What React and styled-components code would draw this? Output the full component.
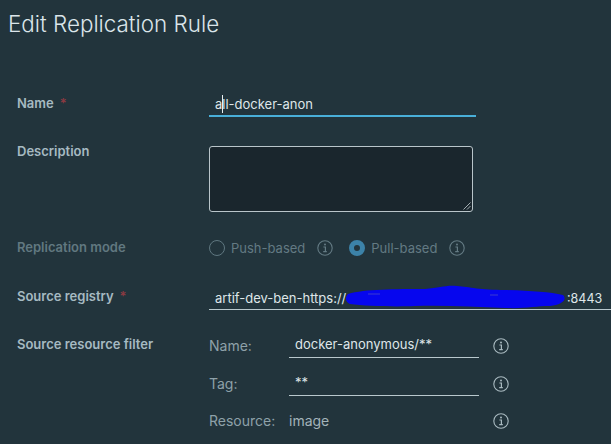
import React from 'react'
import styled, { createGlobalStyle } from 'styled-components'

const Global = createGlobalStyle`
  html, body {
    margin: 0;
    height: 100%;
    background: #22343c;
    overflow: hidden;
  }
`

const Page = styled.div`
  width: 611px;
  height: 444px;
  overflow: hidden;
  background: #22343c;
  font-family: Inter, "Liberation Sans", sans-serif;
`

const Title = styled.h1`
  margin: 0;
  padding: 10px 0 0 8px;
  height: 85px;
  box-sizing: border-box;
  font-size: 22.4px;
  line-height: 28px;
  font-weight: 300;
  color: #dbe5ea;
`

const Row = styled.div`
  display: grid;
  grid-template-columns: 192px 1fr;
  padding-left: 17px;
  height: ${p => p.$height}px;
`

const Label = styled.div`
  padding-top: ${p => p.$top || 0}px;
  font-size: 13px;
  line-height: 16px;
  font-weight: 600;
  color: ${p => (p.$muted ? '#617880' : '#a6bac2')};
`

const Star = styled.span`
  margin-left: 6px;
  color: #8c3a42;
`

const TextField = styled.div`
  position: relative;
  box-sizing: border-box;
  width: ${p => p.$width}px;
  height: ${p => p.$height || 31}px;
  padding: ${p => p.$top ?? 9}px 0 0 6px;
  border-bottom: ${p => (p.$active ? '2px solid #49afd9' : '1px solid #b9c8cd')};
  font-size: 13px;
  line-height: 17px;
  color: #dfe6e9;
  white-space: nowrap;
`

const Caret = styled.span`
  position: absolute;
  left: 13px;
  top: 10px;
  width: 1px;
  height: 18px;
  background: #e8eef0;
`

const TextArea = styled.div`
  position: relative;
  box-sizing: border-box;
  width: 264px;
  height: 66px;
  margin-top: 3px;
  border: 1px solid #b9c5ca;
  border-radius: 3px;
  background: #1a262d;
`

const Grip = styled.svg`
  position: absolute;
  right: 1px;
  bottom: 1px;
  width: 8px;
  height: 8px;
`

const Modes = styled.div`
  display: flex;
  align-items: center;
  height: 18px;
`

const Radio = styled.span`
  box-sizing: border-box;
  flex: none;
  width: 16px;
  height: 16px;
  border-radius: 50%;
  border: ${p => (p.$checked ? '5px solid #3c82a8' : '1px solid #5f7780')};
  background: ${p => (p.$checked ? '#22343c' : 'transparent')};
`

const ModeText = styled.span`
  margin: 0 12px 0 6px;
  font-size: 13px;
  color: #637a83;
`

const IconBox = styled.svg`
  flex: none;
  width: 16px;
  height: 16px;
  margin-right: ${p => p.$after || 0}px;
  color: ${p => (p.$muted ? '#647b84' : '#a9bac0')};
`

const Scribble = styled.svg`
  position: absolute;
  left: 136px;
  top: -5px;
  width: 222px;
  height: 26px;
`

const Port = styled.span`
  position: absolute;
  left: 358px;
  top: 2px;
  font-size: 12.5px;
`

const Filter = styled.div`
  display: grid;
  grid-template-columns: 80px 190px 30px;
  grid-auto-rows: 37.5px;
  margin-top: -9px;
  align-items: start;
`

const FilterLabel = styled.div`
  padding-top: 10px;
  font-size: 14px;
  line-height: 17px;
  color: #8ea1a9;
`

const Plain = styled.div`
  padding-top: 10px;
  font-size: 14px;
  line-height: 17px;
  color: #a3b3b9;
`

const InfoSlot = styled.div`
  display: flex;
  justify-content: flex-end;
  padding-top: 11px;
`

function InfoIcon({ muted, after }) {
  return (
    <IconBox viewBox="0 0 16 16" $muted={muted} $after={after} fill="none">
      <circle cx="8" cy="8" r="7.2" stroke="currentColor" strokeWidth="1.1" />
      <circle cx="8" cy="4.6" r="1" fill="currentColor" />
      <path d="M6.4 7h2v4.4M6.2 11.6h3.6" stroke="currentColor" strokeWidth="1.2" />
    </IconBox>
  )
}

export default function App() {
  return (
    <Page>
      <Global />
      <Title>Edit Replication Rule</Title>
      <Row $height={58}>
        <Label $top={10}>Name<Star>*</Star></Label>
        <TextField $width={267} $height={32} $active $top={11}>
          <Caret />
          all-docker-anon
        </TextField>
      </Row>
      <Row $height={96}>
        <Label>Description</Label>
        <TextArea>
          <Grip viewBox="0 0 8 8" fill="none" stroke="#c6d0d4" strokeWidth="0.8">
            <path d="M0.5 7.5L7.5 0.5M4 7.5L7.5 4" />
          </Grip>
        </TextArea>
      </Row>
      <Row $height={49}>
        <Label $muted>Replication mode</Label>
        <Modes>
          <Radio />
          <ModeText>Push-based</ModeText>
          <InfoIcon muted after={16} />
          <Radio $checked />
          <ModeText>Pull-based</ModeText>
          <InfoIcon muted />
        </Modes>
      </Row>
      <Row $height={48}>
        <Label>Source registry<Star>*</Star></Label>
        <TextField $width={402} $height={22} $top={2}>
          artif-dev-ben-https://
          <Scribble viewBox="0 0 222 26">
            <path
              d="M3 11C20 6 50 6 80 6C95 5 100 2 112 3C125 4 135 7 160 7C185 8 205 9 218 12C223 17 216 22 205 23C190 23 180 26 160 25C130 24 100 22 70 23C50 24 20 23 5 21C0 19 0 14 3 11Z"
              fill="#0606ee"
            />
            <path d="M23 11h12M145 12h8" stroke="#3a3ad0" strokeWidth="1" />
          </Scribble>
          <Port>:8443</Port>
        </TextField>
      </Row>
      <Row $height={100}>
        <Label>Source resource filter</Label>
        <Filter>
          <FilterLabel>Name:</FilterLabel>
          <TextField $width={190}>docker-anonymous/**</TextField>
          <InfoSlot><InfoIcon /></InfoSlot>
          <FilterLabel>Tag:</FilterLabel>
          <TextField $width={190}>**</TextField>
          <InfoSlot><InfoIcon /></InfoSlot>
          <FilterLabel>Resource:</FilterLabel>
          <Plain>image</Plain>
          <InfoSlot><InfoIcon /></InfoSlot>
        </Filter>
      </Row>
    </Page>
  )
}
